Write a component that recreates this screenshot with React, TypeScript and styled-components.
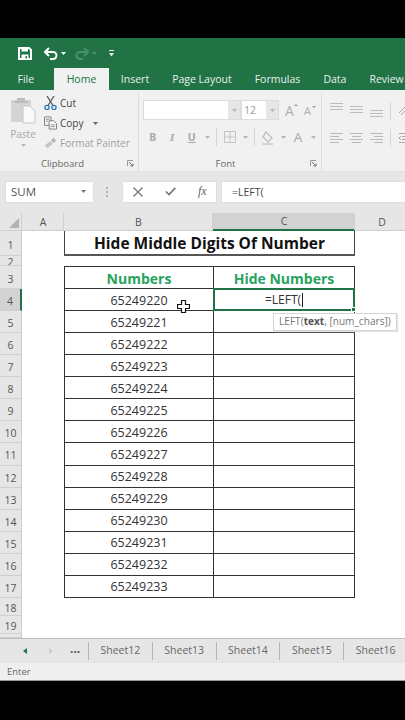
import React from 'react';
import styled, { createGlobalStyle } from 'styled-components';

const green = '#217346';
const uiFont = `'Open Sans', 'Noto Sans', sans-serif`;

const GlobalStyle = createGlobalStyle`
  html, body {
    margin: 0;
    padding: 0;
    background: #000;
  }
  body {
    font-family: ${uiFont};
  }
`;

const rowNumbers = [65249220, 65249221, 65249222, 65249223, 65249224, 65249225, 65249226, 65249227, 65249228, 65249229, 65249230, 65249231, 65249232, 65249233];
const menuTabs = ['File', 'Home', 'Insert', 'Page Layout', 'Formulas', 'Data', 'Review'];
const sheetTabs = ['Sheet12', 'Sheet13', 'Sheet14', 'Sheet15', 'Sheet16'];

const SaveIcon = () => (
  <svg width="14" height="13" viewBox="0 0 14 13">
    <path d="M1 1h10l2 2v9H1z" fill="none" stroke="#fff" strokeWidth="2" />
    <path d="M3.500 1.500h6.500v3H3.500zM3.500 7.500h7V12h-7z" fill="#fff" />
    <path d="M7.500 9h1.500v2.500H7.500z" fill={green} />
  </svg>
);

const UndoIcon = ({ faded }: { faded?: boolean }) => (
  <svg width="14" height="13" viewBox="0 0 14 13" style={faded ? { transform: 'scaleX(-1)' } : undefined}>
    <path d="M3 5h6a3.2 3.2 0 0 1 0 7H6" fill="none" stroke={faded ? '#4c8f6b' : '#fff'} strokeWidth="2" />
    <path d="M5 1 1 5l4 4" fill="none" stroke={faded ? '#4c8f6b' : '#fff'} strokeWidth="2" />
  </svg>
);

const CaretIcon = ({ color = '#fff' }: { color?: string }) => (
  <svg width="5" height="3" viewBox="0 0 5 3">
    <path d="M0 0h5L2.500 3z" fill={color} />
  </svg>
);

const CustomizeIcon = () => (
  <svg width="5" height="7" viewBox="0 0 5 7">
    <path d="M0 0h5v1H0zM0 3h5L2.500 6.500z" fill="#e8f1ec" />
  </svg>
);

const PasteIcon = () => (
  <svg width="26" height="27" viewBox="0 0 26 27">
    <path d="M1 3h20v22H1z" fill="#d4d4d4" />
    <path d="M7 1h8v3h3v2H4V4h3z" fill="#bdbdbd" />
    <path d="M13 9h7l5 5v12H13z" fill="#f9f9f9" stroke="#c6c6c6" />
  </svg>
);

const CutIcon = () => (
  <svg width="13" height="14" viewBox="0 0 13 14">
    <path d="M3 0l6 9.500M10 0 4 9.500" stroke="#5b5b5b" strokeWidth="1.300" fill="none" />
    <circle cx="3" cy="11.500" r="2.100" fill="none" stroke="#2a75b8" strokeWidth="1.300" />
    <circle cx="10" cy="11.500" r="2.100" fill="none" stroke="#2a75b8" strokeWidth="1.300" />
  </svg>
);

const CopyIcon = () => (
  <svg width="14" height="14" viewBox="0 0 14 14">
    <path d="M.500.500h7v9h-7z" fill="#f5f5f5" stroke="#777" />
    <path d="M5.500 4.500h5l3 3v6h-8z" fill="#fff" stroke="#777" />
    <path d="M2 3h4M2 5h2M7 9h5M7 11h5" stroke="#888" />
  </svg>
);

const PainterIcon = () => (
  <svg width="15" height="12" viewBox="0 0 15 12">
    <path d="M1 9l6-5 3 3-6 5z" fill="#c4c4c4" />
    <path d="M8 3l3-3 3 3-3 3z" fill="#b5b5b5" />
  </svg>
);

const LauncherIcon = () => (
  <svg width="7" height="7" viewBox="0 0 7 7">
    <path d="M.500 6V.500H6" fill="none" stroke="#9a9a9a" />
    <path d="M2 2l4 4M6 3.500V6H3.500" fill="none" stroke="#777" />
  </svg>
);

const BorderIcon = () => (
  <svg width="12" height="12" viewBox="0 0 12 12">
    <path d="M.500.500h11v11H.500zM6 .500v11M.500 6h11" fill="none" stroke="#c5c5c5" />
  </svg>
);

const BucketIcon = () => (
  <svg width="15" height="15" viewBox="0 0 15 15">
    <path d="M5 2l6 6-4 4-5-5z" fill="none" stroke="#bdbdbd" strokeWidth="1.300" />
    <path d="M1 13h11v2H1z" fill="#d4d4d4" />
  </svg>
);

const AlignIcon = ({ kind }: { kind: 'left' | 'center' | 'right' }) => {
  const line = (y: number, w: number) => {
    const x = kind === 'left' ? 0 : kind === 'center' ? (13 - w) / 2 : 13 - w;
    return <path key={y} d={`M${x} ${y}h${w}`} stroke="#b9b9b9" />;
  };
  return (
    <svg width="13" height="11" viewBox="0 0 13 11">
      {line(0.5, 13)}
      {line(3.5, 9)}
      {line(6.5, 13)}
      {line(9.5, 9)}
    </svg>
  );
};

const VerticalAlignIcon = ({ offset }: { offset: number }) => (
  <svg width="13" height="16" viewBox="0 0 13 16">
    {[0, 3, 6].map((o) => (
      <path key={o} d={`M0 ${offset + o + 0.5}h13`} stroke="#bcbcbc" />
    ))}
  </svg>
);

const OrientIcon = () => (
  <svg width="12" height="12" viewBox="0 0 12 12">
    <path d="M1 8l6-6M3 10l7-7" stroke="#aaa" fill="none" />
  </svg>
);

const IndentIcon = () => (
  <svg width="10" height="11" viewBox="0 0 10 11">
    <path d="M1 .500h9M4 3.500h6M4 6.500h6M1 9.500h9M3 3 1 5l2 2" stroke="#aaa" fill="none" />
  </svg>
);

const CancelIcon = () => (
  <svg width="10" height="10" viewBox="0 0 10 10">
    <path d="M.500.500l9 9M9.500.500l-9 9" stroke="#777" strokeWidth="1.300" fill="none" />
  </svg>
);

const ConfirmIcon = () => (
  <svg width="11" height="9" viewBox="0 0 11 9">
    <path d="M.800 4.500 4 7.600 10.300.800" stroke="#777" strokeWidth="1.700" fill="none" />
  </svg>
);

const CursorIcon = () => (
  <svg width="13" height="13" viewBox="0 0 13 13">
    <path d="M4.500.500h4v4h4v4h-4v4h-4v-4h-4v-4h4z" fill="#fff" stroke="#111" strokeWidth="1.200" />
  </svg>
);

export default function App() {
  return (
    <>
      <GlobalStyle />
      <Screen>
        <TopLetterbox />
        <Excel>
          <TitleBar>
            <QuickAccess>
              <SaveIcon />
              <QuickGroup $ml={12}>
                <UndoIcon />
                <CaretIcon />
              </QuickGroup>
              <QuickGroup $ml={9}>
                <UndoIcon faded />
                <CaretIcon color="#4c8f6b" />
              </QuickGroup>
              <QuickGroup $ml={12}>
                <CustomizeIcon />
              </QuickGroup>
            </QuickAccess>
            <MenuBar>
              {menuTabs.map((t) => (
                <MenuTab key={t} $active={t === 'Home'}>
                  {t}
                </MenuTab>
              ))}
            </MenuBar>
          </TitleBar>

          <Ribbon>
            <ClipboardGroup>
              <ClipboardBody>
                <PasteBlock>
                  <PasteIcon />
                  <PasteLabel>Paste</PasteLabel>
                  <CaretIcon color="#b5b5b5" />
                </PasteBlock>
                <ClipboardList>
                  <ClipItem>
                    <ClipIcon>
                      <CutIcon />
                    </ClipIcon>
                    Cut
                  </ClipItem>
                  <ClipItem>
                    <ClipIcon>
                      <CopyIcon />
                    </ClipIcon>
                    Copy
                    <CaretSpacer>
                      <CaretIcon color="#666" />
                    </CaretSpacer>
                  </ClipItem>
                  <ClipItem $muted>
                    <ClipIcon>
                      <PainterIcon />
                    </ClipIcon>
                    Format Painter
                  </ClipItem>
                </ClipboardList>
              </ClipboardBody>
              <ClipboardLabel>
                Clipboard
                <LauncherSlot>
                  <LauncherIcon />
                </LauncherSlot>
              </ClipboardLabel>
            </ClipboardGroup>

            <FontGroup>
              <FontControls>
                <FontRow>
                  <ComboBox $width={98}>
                    <ComboArrow>
                      <CaretIcon color="#b5b5b5" />
                    </ComboArrow>
                  </ComboBox>
                  <ComboBox $width={38}>
                    <SizeText>12</SizeText>
                    <ComboArrow>
                      <CaretIcon color="#b5b5b5" />
                    </ComboArrow>
                  </ComboBox>
                  <GrowLetter>A</GrowLetter>
                  <ShrinkLetter>A</ShrinkLetter>
                </FontRow>
                <FontRow>
                  <ToolSlot $width={19.5}>
                    <SansLetter>B</SansLetter>
                  </ToolSlot>
                  <ToolSlot $width={19.5}>
                    <ItalicLetter>I</ItalicLetter>
                  </ToolSlot>
                  <ToolSlot $width={19.5}>
                    <SansLetter $underline>U</SansLetter>
                  </ToolSlot>
                  <ToolSlot $width={11.5}>
                    <CaretIcon color="#b5b5b5" />
                  </ToolSlot>
                  <ToolSlot $width={6}>
                    <RibbonDivider />
                  </ToolSlot>
                  <ToolSlot $width={22}>
                    <BorderIcon />
                  </ToolSlot>
                  <ToolSlot $width={9}>
                    <CaretIcon color="#b5b5b5" />
                  </ToolSlot>
                  <ToolSlot $width={8}>
                    <RibbonDivider />
                  </ToolSlot>
                  <ToolSlot $width={21}>
                    <BucketIcon />
                  </ToolSlot>
                  <ToolSlot $width={9}>
                    <CaretIcon color="#b5b5b5" />
                  </ToolSlot>
                  <ToolSlot $width={20}>
                    <ColorLetter>A</ColorLetter>
                  </ToolSlot>
                  <ToolSlot $width={10}>
                    <CaretIcon color="#b5b5b5" />
                  </ToolSlot>
                </FontRow>
              </FontControls>
              <FontLabel>
                Font
                <LauncherSlot>
                  <LauncherIcon />
                </LauncherSlot>
              </FontLabel>
            </FontGroup>

            <AlignGroup>
              <AlignRow>
                <VerticalAlignIcon offset={0} />
                <VerticalAlignIcon offset={3} />
                <VerticalAlignIcon offset={7} />
                <RibbonDivider />
                <OrientIcon />
              </AlignRow>
              <AlignRow>
                <AlignIcon kind="left" />
                <AlignIcon kind="center" />
                <AlignIcon kind="right" />
                <RibbonDivider />
                <IndentIcon />
              </AlignRow>
            </AlignGroup>
          </Ribbon>

          <FormulaBar>
            <NameBox>
              SUM
              <CaretIcon color="#777" />
            </NameBox>
            <Grip />
            <FormulaButtons>
              <CancelIcon />
              <ConfirmIcon />
              <FxMark>fx</FxMark>
            </FormulaButtons>
            <FormulaInput>=LEFT(</FormulaInput>
          </FormulaBar>

          <SheetArea>
            <Grid>
              <Corner>
                <svg width="10" height="10" viewBox="0 0 10 10">
                  <path d="M10 0v10H0z" fill="#b3b3b3" />
                </svg>
              </Corner>
              <ColHead>A</ColHead>
              <ColHead>B</ColHead>
              <ColHead $active>C</ColHead>
              <ColHead>D</ColHead>

              <RowHead>1</RowHead>
              <Blank />
              <TitleCell>Hide Middle Digits Of Number</TitleCell>
              <Blank />

              <RowHead>2</RowHead>
              <Blank />
              <Blank />
              <Blank />
              <Blank />

              <RowHead>3</RowHead>
              <Blank />
              <TableCell $head $top>
                Numbers
              </TableCell>
              <TableCell $head $top $right>
                Hide Numbers
              </TableCell>
              <Blank />

              {rowNumbers.map((n, i) => (
                <React.Fragment key={n}>
                  <RowHead $active={i === 0}>{i + 4}</RowHead>
                  <Blank />
                  <TableCell>{n}</TableCell>
                  {i === 0 ? (
                    <ActiveCell>
                      =LEFT(
                      <Caret />
                      <FillHandle />
                    </ActiveCell>
                  ) : (
                    <TableCell $right />
                  )}
                  <Blank />
                </React.Fragment>
              ))}

              <RowHead>18</RowHead>
              <Blank />
              <Blank />
              <Blank />
              <Blank />

              <RowHead>19</RowHead>
              <Blank />
              <Blank />
              <Blank />
              <Blank />

              <RowHead />
              <Blank />
              <Blank />
              <Blank />
              <Blank />
            </Grid>
            <CellCursor>
              <CursorIcon />
            </CellCursor>
            <Tooltip>
              LEFT(<b>text</b>, [num_chars])
            </Tooltip>
          </SheetArea>

          <TabBar>
            <TabNav>
              <CaretLeft />
              <CaretRight />
              <Dots>...</Dots>
            </TabNav>
            {sheetTabs.map((s) => (
              <SheetTab key={s}>{s}</SheetTab>
            ))}
          </TabBar>
          <StatusBar>Enter</StatusBar>
        </Excel>
      </Screen>
    </>
  );
}

const Screen = styled.div`
  width: 405px;
  height: 720px;
  display: flex;
  flex-direction: column;
  overflow: hidden;
  background: #000;
`;

const TopLetterbox = styled.div`
  flex: none;
  height: 38px;
  background: #000;
`;

const Excel = styled.div`
  flex: none;
  width: 405px;
  height: 643px;
  display: flex;
  flex-direction: column;
  background: #fff;
`;

const TitleBar = styled.div`
  height: 52px;
  flex: none;
  background: ${green};
  display: flex;
  flex-direction: column;
`;

const QuickAccess = styled.div`
  height: 30px;
  padding: 0 0 0 18px;
  box-sizing: border-box;
  display: flex;
  align-items: center;
`;

const QuickGroup = styled.div<{ $ml: number }>`
  display: flex;
  align-items: center;
  gap: 3px;
  margin-left: ${(p) => p.$ml}px;
`;

const MenuBar = styled.div`
  height: 22px;
  display: flex;
  align-items: stretch;
  white-space: nowrap;
  padding-left: 6px;
`;

const MenuTab = styled.div<{ $active?: boolean }>`
  font-size: 10.500px;
  line-height: 23px;
  padding: 0 ${(p) => (p.$active ? 13 : 11.500)}px;
  color: ${(p) => (p.$active ? green : '#e6f0ea')};
  background: ${(p) => (p.$active ? '#f1f1f1' : 'transparent')};
  margin-left: ${(p) => (p.$active ? 8 : 0)}px;
`;

const Ribbon = styled.div`
  height: 82px;
  flex: none;
  display: flex;
  background: #f1f1f1;
  border-bottom: 1px solid #e3e3e3;
  box-sizing: border-box;
  overflow: hidden;
`;

const RibbonGroup = styled.div`
  flex: none;
  display: flex;
  flex-direction: column;
  justify-content: space-between;
  box-sizing: border-box;
  margin: 3px 0 0;
  border-right: 1px solid #dcdcdc;
`;

const ClipboardGroup = styled(RibbonGroup)`
  width: 139px;
  padding-left: 10px;
`;

const ClipboardBody = styled.div`
  display: flex;
  gap: 8px;
`;

const PasteBlock = styled.div`
  display: flex;
  flex-direction: column;
  align-items: center;
  width: 26px;
  padding-top: 4px;
  color: #a8a8a8;
`;

const PasteLabel = styled.span`
  font-size: 10px;
  line-height: 20px;
`;

const ClipboardList = styled.div`
  display: flex;
  flex-direction: column;
`;

const ClipItem = styled.div<{ $muted?: boolean }>`
  display: flex;
  align-items: center;
  gap: 3px;
  height: 20px;
  font-size: 10px;
  white-space: nowrap;
  color: ${(p) => (p.$muted ? '#a0a0a0' : '#444')};
`;

const ClipIcon = styled.span`
  width: 13px;
  display: flex;
  justify-content: center;
`;

const CaretSpacer = styled.span`
  margin-left: 7px;
  display: flex;
`;

const GroupLabel = styled.div`
  position: relative;
  text-align: center;
  font-size: 9.500px;
  line-height: 14px;
  color: #666;
`;

const ClipboardLabel = styled(GroupLabel)`
  padding-right: 23px;
`;

const FontLabel = styled(GroupLabel)`
  padding-right: 13px;
`;

const LauncherSlot = styled.span`
  position: absolute;
  right: 4px;
  top: 3px;
  display: flex;
`;

const FontGroup = styled(RibbonGroup)`
  width: 183px;
  padding-left: 4px;
`;

const FontControls = styled.div`
  display: flex;
  flex-direction: column;
  gap: 7px;
  padding-top: 7px;
`;

const FontRow = styled.div`
  display: flex;
  align-items: center;
  height: 20px;
`;

const ToolSlot = styled.span<{ $width: number }>`
  width: ${(p) => p.$width}px;
  flex: none;
  display: flex;
  align-items: center;
  justify-content: center;
`;

const ComboBox = styled.div<{ $width: number }>`
  width: ${(p) => p.$width}px;
  height: 20px;
  background: #fff;
  border: 1px solid #dcdcdc;
  box-sizing: border-box;
  display: flex;
  justify-content: space-between;
`;

const ComboArrow = styled.span`
  width: 12px;
  margin-left: auto;
  display: flex;
  align-items: center;
  justify-content: center;
  background: #e6e6e6;
`;

const SizeText = styled.span`
  font-size: 10.500px;
  line-height: 18px;
  color: #9a9a9a;
  padding-left: 2px;
`;

const GrowLetter = styled.span`
  position: relative;
  font-size: 14px;
  color: #b0b0b0;
  margin-left: 6px;

  &::after {
    content: '';
    position: absolute;
    right: -4px;
    top: 3px;
    border-left: 2px solid transparent;
    border-right: 2px solid transparent;
    border-bottom: 2px solid #999;
  }
`;

const ShrinkLetter = styled.span`
  position: relative;
  font-size: 11.500px;
  color: #b0b0b0;
  margin-left: 10px;

  &::after {
    content: '';
    position: absolute;
    right: -5px;
    top: 3px;
    border-left: 2px solid transparent;
    border-right: 2px solid transparent;
    border-top: 2px solid #999;
  }
`;

const SansLetter = styled.span<{ $underline?: boolean }>`
  font-size: 10.500px;
  font-weight: 700;
  color: #a9a9a9;
  text-decoration: ${(p) => (p.$underline ? 'underline' : 'none')};
`;

const ItalicLetter = styled.span`
  font-family: 'Liberation Serif', serif;
  font-size: 11px;
  font-weight: 700;
  font-style: italic;
  color: #a9a9a9;
`;

const RibbonDivider = styled.span`
  width: 1px;
  height: 18px;
  background: #d6d6d6;
`;

const ColorLetter = styled.span`
  font-size: 13.500px;
  color: #a9a9a9;
`;

const AlignGroup = styled.div`
  flex: 1;
  display: flex;
  flex-direction: column;
  gap: 9px;
  padding: 12px 0 0 8px;
`;

const AlignRow = styled.div`
  display: flex;
  align-items: center;
  gap: 7px;
  height: 18px;
`;

const FormulaBar = styled.div`
  height: 41px;
  flex: none;
  display: flex;
  align-items: center;
  background: #e6e6e6;
  padding: 0 0 2px 5px;
  box-sizing: border-box;
`;

const NameBox = styled.div`
  width: 89px;
  height: 22px;
  background: #fff;
  border: 1px solid #dedede;
  box-sizing: border-box;
  display: flex;
  align-items: center;
  justify-content: space-between;
  padding: 0 7px 0 5px;
  font-size: 11.500px;
  color: #555;
`;

const Grip = styled.div`
  width: 2px;
  height: 10px;
  margin: 0 12px 0 12px;
  border-left: 2px dotted #b5b5b5;
`;

const FormulaButtons = styled.div`
  width: 95px;
  height: 22px;
  flex: none;
  background: #fff;
  border: 1px solid #dedede;
  box-sizing: border-box;
  display: flex;
  align-items: center;
  padding-left: 10px;
  gap: 22px;
`;

const FxMark = styled.span`
  font-family: 'Liberation Serif', serif;
  font-style: italic;
  font-size: 12px;
  color: #666;
`;

const FormulaInput = styled.div`
  flex: 1;
  height: 22px;
  margin-left: 4px;
  background: #fff;
  border: 1px solid #dedede;
  border-right: 0;
  box-sizing: border-box;
  padding-left: 10px;
  font-size: 10.500px;
  line-height: 20px;
  color: #444;
`;

const SheetArea = styled.div`
  position: relative;
  flex: 1;
  min-height: 0;
  overflow: hidden;
  background: #fff;
`;

const Grid = styled.div`
  display: grid;
  grid-template-columns: 22px 42px 149px 142px 54px;
  grid-template-rows: 18px 25px 10px 23px repeat(14, 22.070px) 18px 18px 4px;
`;

const HeadBase = styled.div`
  background: #e6e6e6;
  display: flex;
  align-items: center;
  justify-content: center;
  font-size: 10.500px;
  color: #555;
  box-sizing: border-box;
  overflow: hidden;
`;

const Corner = styled(HeadBase)`
  justify-content: flex-end;
  align-items: flex-end;
  padding: 0 2px 2px 0;
  border-right: 1px solid #cfcfcf;
  border-bottom: 1px solid #cfcfcf;
`;

const ColHead = styled(HeadBase)<{ $active?: boolean }>`
  background: ${(p) => (p.$active ? '#d2d2d2' : '#e6e6e6')};
  border-right: 1px solid #cfcfcf;
  border-bottom: ${(p) => (p.$active ? `2px solid ${green}` : '1px solid #cfcfcf')};
  padding-left: 1px;
`;

const RowHead = styled(HeadBase)<{ $active?: boolean }>`
  background: ${(p) => (p.$active ? '#d2d2d2' : '#e6e6e6')};
  border-right: ${(p) => (p.$active ? `2px solid ${green}` : '1px solid #cfcfcf')};
  border-bottom: 1px solid #cfcfcf;
  padding-top: 3px;
`;

const Blank = styled.div`
  background: #fff;
`;

const TitleCell = styled.div`
  grid-column: span 2;
  box-sizing: border-box;
  border: 1px solid #444;
  border-top: 0;
  border-bottom: 2px solid #555;
  display: flex;
  align-items: center;
  justify-content: center;
  font-size: 15.500px;
  font-weight: 700;
  color: #111;
`;

const TableCell = styled.div<{ $head?: boolean; $top?: boolean; $right?: boolean }>`
  box-sizing: border-box;
  border-left: 1px solid #333;
  border-bottom: 1px solid #333;
  border-top: ${(p) => (p.$top ? '1px solid #333' : '0')};
  border-right: ${(p) => (p.$right ? '1px solid #333' : '0')};
  display: flex;
  align-items: center;
  justify-content: center;
  padding-top: 1px;
  font-size: ${(p) => (p.$head ? 14 : 12.500)}px;
  font-weight: ${(p) => (p.$head ? 700 : 400)};
  color: ${(p) => (p.$head ? '#27a35e' : '#333')};
`;

const ActiveCell = styled.div`
  position: relative;
  box-sizing: border-box;
  margin: -1px 0 0 0;
  border: 2px solid ${green};
  display: flex;
  align-items: center;
  justify-content: center;
  font-size: 12px;
  color: #333;
`;

const Caret = styled.span`
  width: 1px;
  height: 14px;
  background: #222;
  margin-left: 1px;
`;

const FillHandle = styled.span`
  position: absolute;
  right: -3px;
  bottom: -3px;
  width: 5px;
  height: 5px;
  background: ${green};
  border: 1px solid #fff;
  box-sizing: border-box;
`;

const CellCursor = styled.div`
  position: absolute;
  left: 177px;
  top: 87px;
  display: flex;
`;

const Tooltip = styled.div`
  position: absolute;
  left: 273px;
  top: 100px;
  height: 16px;
  padding: 0 5px;
  background: #fff;
  border: 1px solid #d4d4d4;
  box-shadow: 1px 1px 1px #e4e4e4;
  font-size: 10.100px;
  line-height: 14px;
  color: #777;
  white-space: nowrap;

  b {
    color: #555;
  }
`;

const TabBar = styled.div`
  height: 25px;
  flex: none;
  display: flex;
  align-items: center;
  background: #e6e6e6;
  border-top: 1px solid #bdbdbd;
  box-sizing: border-box;
  overflow: hidden;
`;

const TabNav = styled.div`
  width: 88px;
  flex: none;
  display: flex;
  align-items: center;
  padding-left: 23px;
  box-sizing: border-box;
  color: #555;
`;

const CaretLeft = styled.span`
  border-right: 4px solid ${green};
  border-top: 3px solid transparent;
  border-bottom: 3px solid transparent;
`;

const CaretRight = styled.span`
  margin-left: 22px;
  border-left: 4px solid #cfcfcf;
  border-top: 3px solid transparent;
  border-bottom: 3px solid transparent;
`;

const Dots = styled.span`
  margin-left: 17px;
  font-size: 12px;
  font-weight: 700;
  line-height: 12px;
  margin-top: -4px;
`;

const SheetTab = styled.div`
  width: 63.800px;
  flex: none;
  height: 18px;
  box-sizing: border-box;
  border-left: 1px solid #b5b5b5;
  text-align: center;
  font-size: 10.500px;
  line-height: 17px;
  color: #666;
`;

const StatusBar = styled.div`
  height: 18px;
  flex: none;
  background: #efefef;
  padding-left: 7px;
  font-size: 9.500px;
  line-height: 18px;
  color: #666;
  border-bottom: 1px solid #999;
  box-sizing: border-box;
`;
